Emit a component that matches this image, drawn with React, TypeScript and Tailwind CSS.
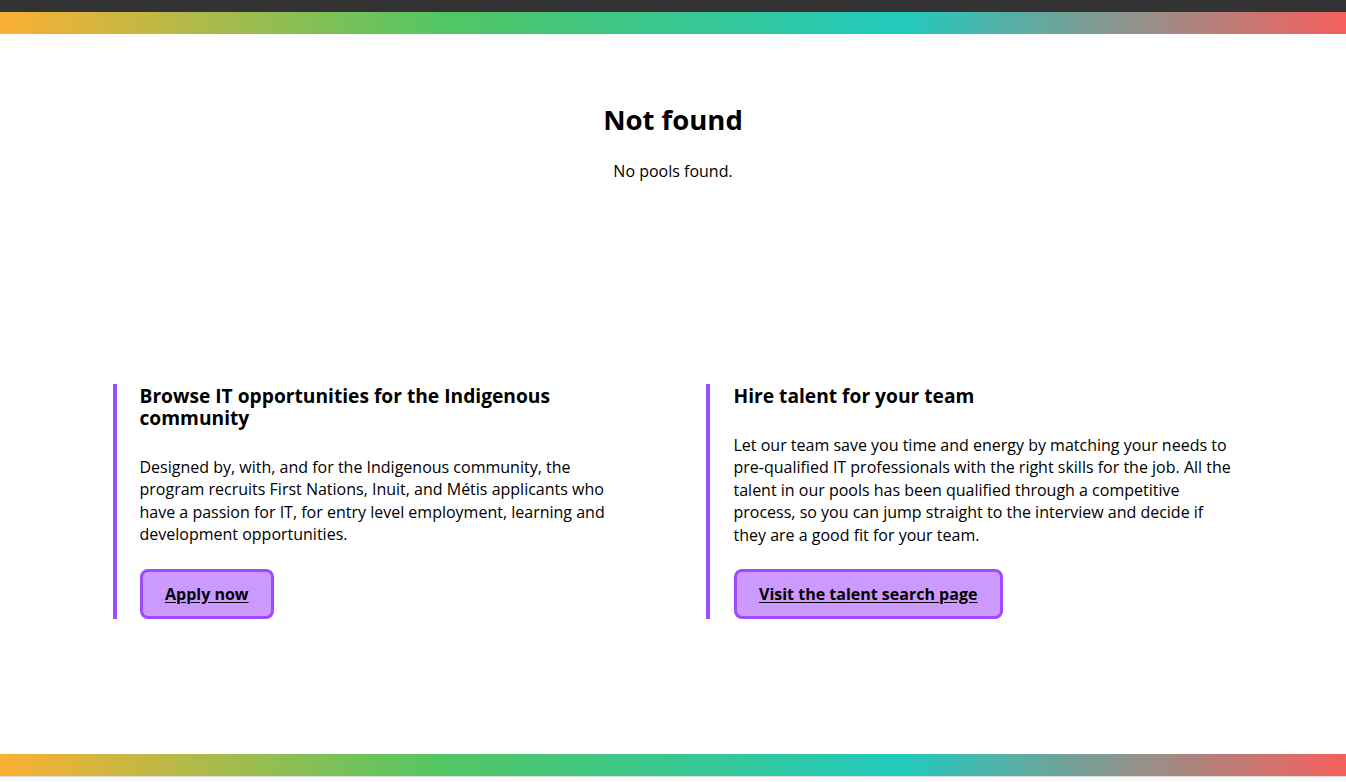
import React from "react";

const Bar = () => (
  <div className="h-[22px] w-full bg-[linear-gradient(90deg,#fbb034_0%,#51c664_33%,#22c9bd_67%,#f6605d_100%)]" />
);

const Card = ({ title, body, cta, wide }: { title: string; body: string; cta: string; wide?: boolean }) => (
  <div
    className={
      wide
        ? "w-[528px] border-l-4 border-[#9d4bff] pl-[24px] flex flex-col items-start"
        : "w-[524px] border-l-4 border-[#9d4bff] pl-[23px] flex flex-col items-start"
    }
  >
    <h2 className="text-[19.2px] leading-[22px] font-bold text-black m-0 mt-[1px]">{title}</h2>
    <p className="mt-[26.5px] text-[16px] leading-[22.5px] text-black">{body}</p>
    <a
      href="#"
      className="mt-[23px] inline-flex items-center h-[50px] px-[22.5px] border-[3px] border-[#9d4bff] bg-[#cc99ff] rounded-[8px] font-bold text-[16px] text-black underline underline-offset-2"
    >
      {cta}
    </a>
  </div>
);

export default function App() {
  return (
    <div className="min-h-[782px] flex flex-col bg-white" style={{ fontFamily: '"Open Sans", "Noto Sans", sans-serif' }}>
      <div className="h-[12px] bg-[#333333]" />
      <Bar />
      <main className="flex-1 flex flex-col items-center">
        <h1 className="mt-[68px] text-[27.5px] leading-[36px] font-bold text-black">Not found</h1>
        <p className="mt-[21px] text-[16px] leading-[24px] text-black">No pools found.</p>
        <div className="mt-[201px] flex gap-[69px] w-[1121px]">
          <Card
            title="Browse IT opportunities for the Indigenous community"
            body="Designed by, with, and for the Indigenous community, the program recruits First Nations, Inuit, and Métis applicants who have a passion for IT, for entry level employment, learning and development opportunities."
            cta="Apply now"
          />
          <Card
            wide
            title="Hire talent for your team"
            body="Let our team save you time and energy by matching your needs to pre-qualified IT professionals with the right skills for the job. All the talent in our pools has been qualified through a competitive process, so you can jump straight to the interview and decide if they are a good fit for your team."
            cta="Visit the talent search page"
          />
        </div>
      </main>
      <Bar />
      <div className="h-[6px] border-t border-[#dddddd] bg-[#f8f8f8]" />
    </div>
  );
}
